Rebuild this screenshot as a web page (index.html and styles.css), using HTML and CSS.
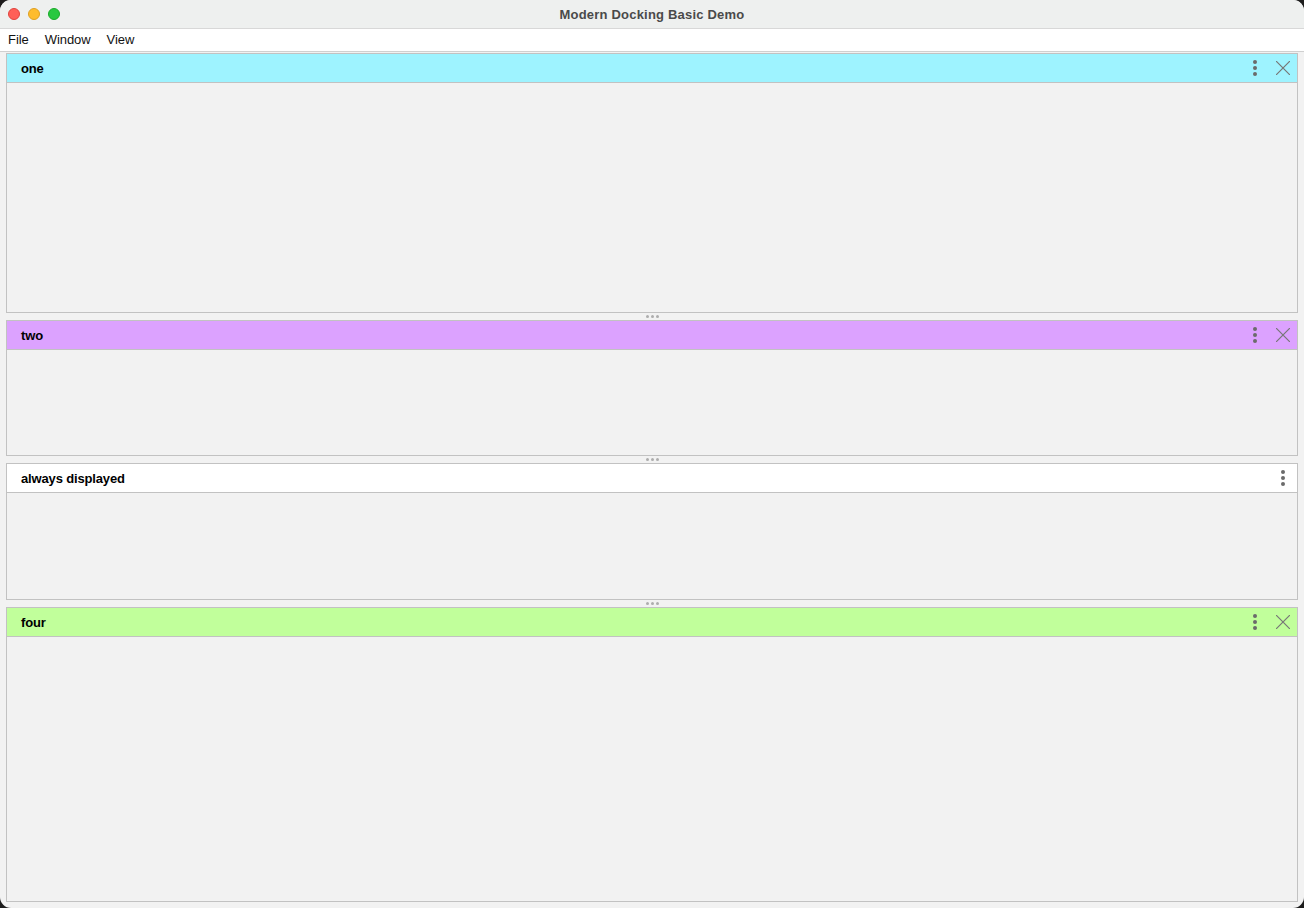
FILE: index.html
```html
<!DOCTYPE html>
<html lang="en">
<head>
  <meta charset="UTF-8">
  <title>Modern Docking Basic Demo</title>
  <link rel="stylesheet" href="styles.css">
</head>
<body>
  <div class="window">
    <div class="titlebar">
      <div class="lights">
        <span class="light light-close"></span>
        <span class="light light-min"></span>
        <span class="light light-max"></span>
      </div>
      <div class="title">Modern Docking Basic Demo</div>
    </div>

    <div class="menubar">
      <span class="menu-item">File</span>
      <span class="menu-item">Window</span>
      <span class="menu-item">View</span>
    </div>

    <div class="dock-area">
      <section class="panel panel-one">
        <header class="panel-header header-cyan">
          <span class="panel-name">one</span>
          <svg class="icon-dots" viewBox="0 0 6 18"><circle cx="3" cy="3" r="2"/><circle cx="3" cy="9" r="2"/><circle cx="3" cy="15" r="2"/></svg>
          <svg class="icon-close" viewBox="0 0 14 14"><path d="M0 0L14 14M14 0L0 14"/></svg>
        </header>
      </section>
      <div class="splitter"><i></i><i></i><i></i></div>

      <section class="panel panel-two">
        <header class="panel-header header-purple">
          <span class="panel-name">two</span>
          <svg class="icon-dots" viewBox="0 0 6 18"><circle cx="3" cy="3" r="2"/><circle cx="3" cy="9" r="2"/><circle cx="3" cy="15" r="2"/></svg>
          <svg class="icon-close" viewBox="0 0 14 14"><path d="M0 0L14 14M14 0L0 14"/></svg>
        </header>
      </section>
      <div class="splitter"><i></i><i></i><i></i></div>

      <section class="panel panel-three">
        <header class="panel-header header-white">
          <span class="panel-name">always displayed</span>
          <svg class="icon-dots icon-last" viewBox="0 0 6 18"><circle cx="3" cy="3" r="2"/><circle cx="3" cy="9" r="2"/><circle cx="3" cy="15" r="2"/></svg>
        </header>
      </section>
      <div class="splitter"><i></i><i></i><i></i></div>

      <section class="panel panel-four">
        <header class="panel-header header-green">
          <span class="panel-name">four</span>
          <svg class="icon-dots" viewBox="0 0 6 18"><circle cx="3" cy="3" r="2"/><circle cx="3" cy="9" r="2"/><circle cx="3" cy="15" r="2"/></svg>
          <svg class="icon-close" viewBox="0 0 14 14"><path d="M0 0L14 14M14 0L0 14"/></svg>
        </header>
      </section>
    </div>
  </div>
</body>
</html>
```

FILE: styles.css
```css
/* Page */
html, body {
  margin: 0;
  height: 100%;
  background-color: #1c1c1c;
  overflow: hidden;
}

body {
  font-family: "Liberation Sans", Arial, sans-serif;
  color: #000;
}

.window {
  width: 1304px;
  height: 908px;
  display: flex;
  flex-direction: column;
  background-color: #f2f2f2;
  border-radius: 11px;
  overflow: hidden;
}

/* Title bar */
.titlebar {
  height: 28px;
  flex: none;
  display: flex;
  align-items: center;
  justify-content: center;
  position: relative;
  background-color: #eef0ef;
  border-bottom: 1px solid #d8d8d8;
}

.lights {
  position: absolute;
  left: 8px;
  top: 8px;
  display: flex;
  gap: 8px;
}

.light {
  width: 12px;
  height: 12px;
  border-radius: 50%;
  box-sizing: border-box;
}

.light-close { background-color: #ff5f57; border: 1px solid #e0443e; }
.light-min { background-color: #febc2e; border: 1px solid #dfa023; }
.light-max { background-color: #28c840; border: 1px solid #1aab29; }

.title {
  font-size: 13px;
  font-weight: bold;
  color: #4a4a4a;
  letter-spacing: 0.2px;
}

/* Menu bar */
.menubar {
  height: 20px;
  padding: 0 0 2px 8px;
  flex: none;
  display: flex;
  align-items: center;
  gap: 16px;
  background-color: #fff;
  border-bottom: 1px solid #d0d0d0;
  font-size: 13px;
  color: #111;
}

.menu-item {
  letter-spacing: -0.06px;
}

/* Dock panels */
.dock-area {
  flex: 1;
  display: flex;
  flex-direction: column;
  padding: 1px 6px 5px 6px;
}

.panel {
  box-sizing: border-box;
  border: 1px solid #c2c2c2;
  background-color: #f2f2f2;
}

.panel-one { height: 260px; }
.panel-two { height: 136px; }
.panel-three { height: 137px; }
.panel-four { height: 295px; }

.panel-header {
  height: 29px;
  box-sizing: border-box;
  display: flex;
  align-items: center;
  padding-left: 14px;
  border-bottom: 1px solid #c2c2c2;
}

.header-cyan { background-color: #9ef3ff; }
.header-purple { background-color: #dca2ff; }
.header-white { background-color: #fff; }
.header-green { background-color: #c1ff9b; }

.panel-name {
  flex: 1;
  font-size: 13px;
  font-weight: bold;
  letter-spacing: -0.15px;
}

.icon-dots {
  width: 6px;
  height: 18px;
  fill: #6b6b6b;
  margin-right: 18px;
}

.icon-dots.icon-last {
  margin-right: 11px;
}

.icon-close {
  width: 14px;
  height: 14px;
  margin-right: 7px;
  fill: none;
  stroke: #777;
  stroke-width: 1.2;
}

/* Splitter between panels */
.splitter {
  height: 7px;
  flex: none;
  display: flex;
  align-items: center;
  justify-content: center;
  gap: 2px;
}

.splitter i {
  width: 3px;
  height: 3px;
  border-radius: 50%;
  background-color: #adadad;
}
```
